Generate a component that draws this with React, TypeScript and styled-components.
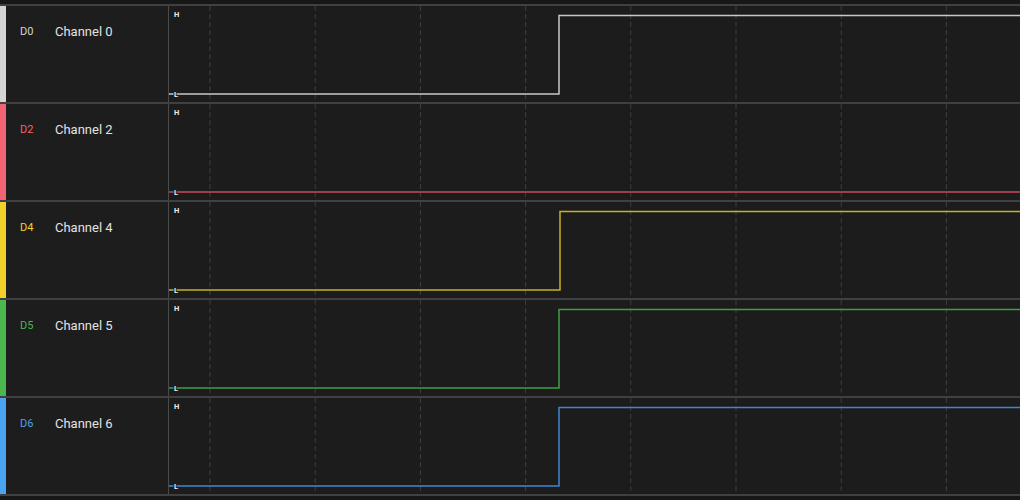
import React from 'react';
import styled, { createGlobalStyle } from 'styled-components';

const GlobalStyle = createGlobalStyle`
  html, body {
    margin: 0;
    padding: 0;
    background: #161616;
    font-family: Roboto, "Liberation Sans", sans-serif;
    overflow: hidden;
  }
`;

interface Channel {
    id: string;
    name: string;
    color: string;
    trace: string;
    edge: number | null;
}

const CHANNELS: Channel[] = [
    { id: 'D0', name: 'Channel 0', color: '#d4d4d4', trace: '#c8c8c8', edge: 390 },
    { id: 'D2', name: 'Channel 2', color: '#f06476', trace: '#c94a5a', edge: null },
    { id: 'D4', name: 'Channel 4', color: '#f2d22a', trace: '#c9b024', edge: 391 },
    { id: 'D5', name: 'Channel 5', color: '#4cb64f', trace: '#3f9e45', edge: 390 },
    { id: 'D6', name: 'Channel 6', color: '#4aa2f2', trace: '#3f85d6', edge: 390 },
];

const ROW_H = 96;
const HIGH_Y = 9.5;
const LOW_Y = 88;
const GRID_START = 41;
const GRID_STEP = 105.2;

const Viewer = styled.div`
  width: 1020px;
  height: 500px;
  padding-top: 4px;
  box-sizing: border-box;
  background: #171717;
`;

const Row = styled.div`
  display: flex;
  height: ${ROW_H}px;
  border-top: 2px solid #404040;
  &:last-child {
    border-bottom: 2px solid #404040;
  }
`;

const LabelPanel = styled.div<{ $color: string }>`
  width: 162px;
  flex: 0 0 162px;
  border-left: 6px solid ${props => props.$color};
  border-right: 1px solid #4a4a4a;
  background: #1d1d1d;
  display: flex;
  align-items: flex-start;
  padding-top: 18px;
  box-sizing: content-box;
`;

const ChannelId = styled.span<{ $color: string }>`
  width: 35px;
  padding-left: 14px;
  font-size: 11px;
  line-height: 16px;
  color: ${props => props.$color};
`;

const ChannelName = styled.span`
  font-size: 13px;
  line-height: 16px;
  color: #e2e2e2;
`;

const Plot = styled.svg`
  flex: 1;
  display: block;
  height: ${ROW_H}px;
  background: #1c1c1c;
`;

const LevelText = styled.text`
  font-family: Roboto, "Liberation Sans", sans-serif;
  font-size: 7.5px;
  font-weight: 700;
  fill: #ececec;
  paint-order: stroke;
  stroke: #1c1c1c;
  stroke-width: 2px;
`;

const gridXs = Array.from({ length: 9 }, (_, i) => GRID_START + i * GRID_STEP);

const Trace: React.FC<{ channel: Channel }> = ({ channel }) => {
    const d = channel.edge === null
        ? `M0 ${LOW_Y} H900`
        : `M0 ${LOW_Y} H${channel.edge} V${HIGH_Y} H900`;
    return (
        <Plot>
            {gridXs.map(x => (
                <line key={x} x1={x} x2={x} y1={0} y2={ROW_H} stroke="#3e3e3e" strokeWidth={1} strokeDasharray="5 3" />
            ))}
            <path d={d} fill="none" stroke={channel.trace} strokeWidth={1.5} />
            <LevelText x={5} y={11}>H</LevelText>
            <LevelText x={5} y={LOW_Y + 2.7}>L</LevelText>
        </Plot>
    );
};

const App: React.FC = () => (
    <>
        <GlobalStyle />
        <Viewer>
            {CHANNELS.map(ch => (
                <Row key={ch.id}>
                    <LabelPanel $color={ch.color}>
                        <ChannelId $color={ch.color}>{ch.id}</ChannelId>
                        <ChannelName>{ch.name}</ChannelName>
                    </LabelPanel>
                    <Trace channel={ch} />
                </Row>
            ))}
        </Viewer>
    </>
);

export default App;
